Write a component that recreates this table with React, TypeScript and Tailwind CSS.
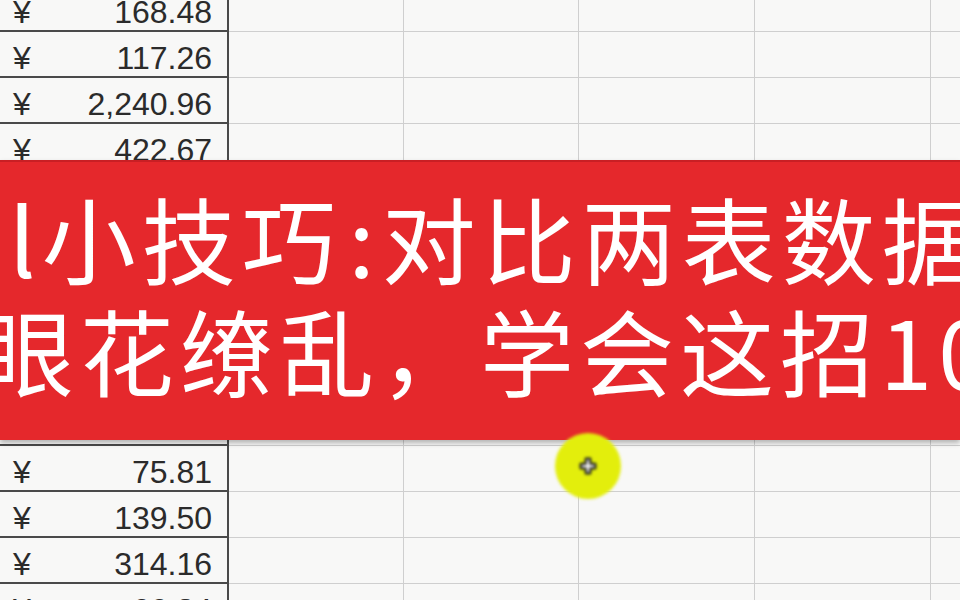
const rows = [
  "168.48",
  "117.26",
  "2,240.96",
  "422.67",
  "86.30",
  "512.04",
  "1,024.75",
  "63.18",
  "290.55",
  "47.92",
  "75.81",
  "139.50",
  "314.16",
  "66.84",
];

const Cursor = () => (
  <div className="absolute left-[555px] top-[433px] w-[66px] h-[66px] rounded-full bg-[#e3ee0c] blur-[1.5px] flex items-center justify-center">
    <svg width="18" height="18" viewBox="0 0 16 16">
      <path
        d="M6 1.5h4v4.5h4.5v4H10v4.5H6V10H1.5V6H6z"
        fill="#fff"
        stroke="#1e1e1e"
        strokeWidth="2"
        strokeLinejoin="round"
      />
    </svg>
  </div>
);

export default function App() {
  return (
    <div className="relative w-[960px] h-[600px] overflow-hidden bg-[#f8f8f7] font-['Liberation_Sans',sans-serif]">
      <div className="flex flex-col mt-[-14px]">
        {rows.map((value, i) => (
          <div key={i} className="flex h-[46px] shrink-0">
            <div className="w-[229px] shrink-0 flex items-end justify-between pl-[13px] pr-[15px] pb-[2px] border-b-2 border-r-2 border-[#4a4a4a] text-[32px] leading-none text-[#2b2b2b]">
              <span>¥</span>
              <span>{value}</span>
            </div>
            <div className="w-[175px] shrink-0 border-b border-r border-[#cfcfcf]" />
            <div className="w-[175px] shrink-0 border-b border-r border-[#cfcfcf]" />
            <div className="w-[176px] shrink-0 border-b border-r border-[#cfcfcf]" />
            <div className="w-[176px] shrink-0 border-b border-r border-[#cfcfcf]" />
            <div className="flex-1 border-b border-[#cfcfcf]" />
          </div>
        ))}
      </div>

      <div className="absolute left-0 right-0 top-[160px] h-[280px] bg-[#e5282c] border-t-2 border-[#c91f24] shadow-[0_3px_5px_rgba(0,0,0,0.28)] overflow-hidden font-['Noto_Sans_CJK_SC',sans-serif] text-white text-[94px] leading-[112px] tracking-[6px] pt-[19px]">
        <div className="whitespace-nowrap ml-[-210px]">
          Excel小技巧<span className="inline-block w-[40px] text-center tracking-normal">:</span>对比两表数据不再
        </div>
        <div className="whitespace-nowrap ml-[-20px]">眼花缭乱，学会这招10秒搞定</div>
      </div>

      <Cursor />
    </div>
  );
}
